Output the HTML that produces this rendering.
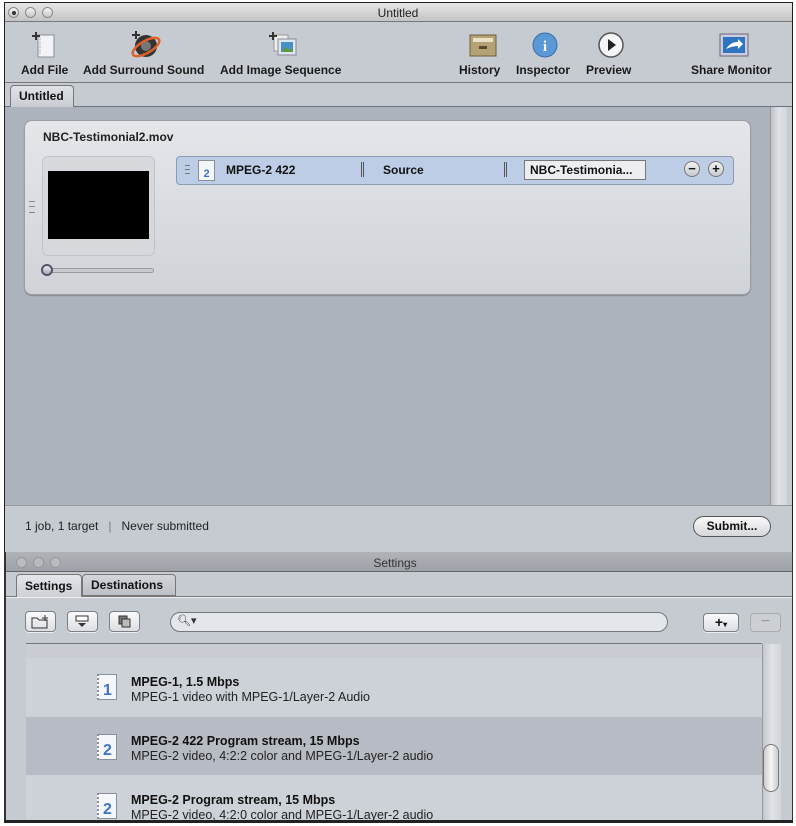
<!DOCTYPE html>
<html><head><meta charset="utf-8"><style>
*{margin:0;padding:0;box-sizing:border-box}
body{width:796px;height:823px;background:#fff;position:relative;overflow:hidden;font-family:"Liberation Sans",sans-serif;color:#111}
.a{position:absolute}
.b{font-weight:bold;font-size:12px}
.lbl{position:absolute;top:63px;font-weight:bold;font-size:12px;color:#1a1a1a;white-space:nowrap}
.dot{position:absolute;width:11px;height:11px;border-radius:50%;border:1px solid #888;background:linear-gradient(#f4f4f4,#c8c8c8)}
.btn{position:absolute;border:1px solid #7b7f86;border-radius:4px;background:linear-gradient(#fbfbfc,#dcdee2);box-shadow:0 1px 0 #eee}
.row{position:absolute;left:26px;width:736px}
.fi{position:absolute;width:20px;height:26px;background:#f4f6fa;border:1px solid #8a9099;border-left:2px dotted #8a9099;color:#3f74c6;font-weight:bold;font-size:16px;text-align:center;line-height:32px}
.t1{position:absolute;left:131px;font-weight:bold;font-size:12.5px;color:#111}
.t2{position:absolute;left:131px;font-size:12.5px;color:#222}
</style></head><body>
<div class="a" style="left:4px;top:2px;width:789px;height:550px;border:1px solid #222;background:#c6cad1"></div>
<div class="a" style="left:5px;top:3px;width:787px;height:19px;background:linear-gradient(#e6e6e6,#c4c4c4);border-bottom:1px solid #777"></div>
<div class="dot" style="left:8px;top:7px"></div><div class="a" style="left:12px;top:11px;width:4px;height:4px;border-radius:50%;background:#333"></div>
<div class="dot" style="left:25px;top:7px"></div><div class="dot" style="left:42px;top:7px"></div>
<div class="a" style="left:0;width:796px;top:6px;text-align:center;font-size:12px;color:#222">Untitled</div>
<svg class="a" style="left:32px;top:31px" width="26" height="28"><rect x="6" y="4" width="16" height="22" fill="#f2f4f7" stroke="#8b9099"/><line x1="8" y1="6" x2="8" y2="24" stroke="#999" stroke-dasharray="1 1"/><path d="M0 5h8M4 1v8" stroke="#333" stroke-width="2"/></svg>
<svg class="a" style="left:130px;top:30px" width="32" height="30"><circle cx="16" cy="16" r="11" fill="#333"/><circle cx="16" cy="16" r="5" fill="#777"/><ellipse cx="16" cy="17" rx="15" ry="6" fill="none" stroke="#e0602a" stroke-width="2.5" transform="rotate(-30 16 17)"/><path d="M2 5h8M6 1v8" stroke="#333" stroke-width="2"/></svg>
<svg class="a" style="left:268px;top:31px" width="32" height="28"><rect x="6" y="4" width="14" height="16" fill="#eee" stroke="#999"/><rect x="10" y="8" width="18" height="16" fill="#dfe6ee" stroke="#889"/><rect x="13" y="11" width="12" height="10" fill="#4a90c8"/><path d="M13 21l5-5 4 3 3-2v4z" fill="#5a9a48"/><path d="M1 5h8M5 1v8" stroke="#333" stroke-width="2"/></svg>
<svg class="a" style="left:469px;top:33px" width="28" height="24"><rect x="1" y="2" width="26" height="21" fill="#b5a274" stroke="#6e5f3c"/><rect x="4" y="5" width="20" height="4" fill="#e9e2c9"/><rect x="10" y="13" width="8" height="3" fill="#5a4c2a"/></svg>
<svg class="a" style="left:530px;top:31px" width="30" height="28"><circle cx="15" cy="14" r="12" fill="#5b98d6" stroke="#3c6ea8"/><text x="15" y="20" text-anchor="middle" fill="#fff" font-family="Liberation Serif" font-weight="bold" font-size="15">i</text></svg>
<svg class="a" style="left:596px;top:31px" width="30" height="28"><circle cx="15" cy="14" r="12" fill="#f4f5f7" stroke="#555" stroke-width="1.5"/><path d="M12 8l8 6-8 6z" fill="#222"/></svg>
<svg class="a" style="left:719px;top:33px" width="30" height="24"><rect x="1" y="1" width="28" height="22" fill="#ccd" stroke="#667"/><rect x="4" y="4" width="22" height="16" fill="#2f74c0"/><path d="M7 16c4-6 8-7 12-7v-3l5 5-5 5v-3c-4 0-8 1-12 3z" fill="#fff"/></svg>
<div class="lbl" style="left:21px">Add File</div>
<div class="lbl" style="left:83px">Add Surround Sound</div>
<div class="lbl" style="left:220px">Add Image Sequence</div>
<div class="lbl" style="left:459px">History</div>
<div class="lbl" style="left:516px">Inspector</div>
<div class="lbl" style="left:586px">Preview</div>
<div class="lbl" style="left:691px">Share Monitor</div>
<div class="a" style="left:5px;top:82px;width:787px;height:25px;background:#c6cad1;border-top:1px solid #777;border-bottom:1px solid #6e737b"></div>
<div class="a" style="left:10px;top:85px;width:64px;height:22px;background:linear-gradient(#dfe2e6,#c9ccd2);border:1px solid #777;border-bottom:none;border-radius:4px 4px 0 0;font-weight:bold;font-size:12px;padding:3px 0 0 8px">Untitled</div>
<div class="a" style="left:5px;top:107px;width:765px;height:398px;background:#adb3bc"></div>
<div class="a" style="left:770px;top:107px;width:17px;height:398px;background:linear-gradient(90deg,#bfc3ca,#dfe1e5,#d3d6db);border-left:1px solid #999"></div>
<div class="a" style="left:24px;top:120px;width:727px;height:175px;border-radius:8px;background:linear-gradient(#e4e6ea,#d0d3d8);border:1px solid #9a9ea6;box-shadow:0 1px 1px #888"></div>
<div class="a b" style="left:43px;top:130px;color:#222">NBC-Testimonial2.mov</div>
<div class="a" style="left:29px;top:201px;width:6px;height:12px;border-top:1px solid #888;border-bottom:1px solid #888"><div style="margin-top:4px;border-top:1px solid #888"></div></div>
<div class="a" style="left:42px;top:156px;width:113px;height:100px;border-radius:6px;background:#d6d8dc;border:1px solid #c0c3c8"></div>
<div class="a" style="left:48px;top:171px;width:101px;height:68px;background:#000"></div>
<div class="a" style="left:44px;top:268px;width:110px;height:5px;border-radius:3px;background:#c8cbd0;border:1px solid #999"></div>
<div class="a" style="left:41px;top:264px;width:12px;height:12px;border-radius:50%;background:linear-gradient(#e8eaee,#aab);border:2px solid #556"></div>
<div class="a" style="left:176px;top:156px;width:558px;height:29px;border-radius:4px;background:#bccde5;border:1px solid #8c9bb0"></div>
<div class="a" style="left:185px;top:165px;width:5px;height:9px;border-top:1px solid #777;border-bottom:1px solid #777"><div style="margin-top:3px;border-top:1px solid #777"></div></div>
<div class="a" style="left:198px;top:160px;width:17px;height:21px;background:#f4f6fa;border:1px solid #8a9099;color:#3f74c6;font-weight:bold;font-size:11px;text-align:center;line-height:26px">2</div>
<div class="a b" style="left:226px;top:163px">MPEG-2 422</div>
<div class="a" style="left:361px;top:162px;width:3px;height:15px;border-left:1px solid #555;border-right:1px solid #555"></div>
<div class="a b" style="left:383px;top:163px">Source</div>
<div class="a" style="left:504px;top:162px;width:3px;height:15px;border-left:1px solid #555;border-right:1px solid #555"></div>
<div class="a b" style="left:524px;top:160px;width:122px;height:20px;background:#eceef2;border:1px solid #777;padding:2px 0 0 5px">NBC-Testimonia...</div>
<div class="a" style="left:684px;top:161px;width:16px;height:16px;border-radius:50%;border:1px solid #777;background:linear-gradient(#f2f2f4,#c8cad0);text-align:center;font-weight:bold;font-size:13px;line-height:13px">−</div>
<div class="a" style="left:708px;top:161px;width:16px;height:16px;border-radius:50%;border:1px solid #777;background:linear-gradient(#f2f2f4,#c8cad0);text-align:center;font-weight:bold;font-size:13px;line-height:14px">+</div>
<div class="a" style="left:5px;top:505px;width:787px;height:47px;background:#c6cad1;border-top:1px solid #999"></div>
<div class="a" style="left:25px;top:519px;font-size:12px;color:#222">1 job, 1 target &nbsp;&nbsp;<span style="color:#777">|</span>&nbsp;&nbsp; Never submitted</div>
<div class="a b" style="left:693px;top:516px;width:78px;height:21px;border-radius:11px;border:1px solid #555;background:linear-gradient(#fafafa,#d5d7db);text-align:center;line-height:19px">Submit...</div>
<div class="a" style="left:4px;top:552px;width:789px;height:271px;background:#c6cad1;border-left:2px solid #333;border-right:1px solid #333"></div>
<div class="a" style="left:6px;top:552px;width:786px;height:20px;background:linear-gradient(#b0b3b8,#9ea2a8);border-bottom:1px solid #666"></div>
<div class="dot" style="left:16px;top:557px;border-color:#999;background:#b8bbc0"></div><div class="dot" style="left:33px;top:557px;border-color:#999;background:#b8bbc0"></div><div class="dot" style="left:50px;top:557px;border-color:#999;background:#b8bbc0"></div>
<div class="a" style="left:0;width:790px;top:556px;text-align:center;font-size:12px;color:#333">Settings</div>
<div class="a" style="left:6px;top:596px;width:786px;height:2px;border-top:1px solid #777;border-bottom:1px solid #eee"></div>
<div class="a b" style="left:16px;top:574px;width:66px;height:23px;background:linear-gradient(#e4e6ea,#cdd0d5);border:1px solid #777;border-bottom:none;border-radius:4px 4px 0 0;padding:4px 0 0 8px">Settings</div>
<div class="a b" style="left:82px;top:574px;width:94px;height:22px;background:linear-gradient(#d2d5da,#bcc0c6);border:1px solid #777;border-radius:4px 4px 0 0;padding:3px 0 0 8px">Destinations</div>
<div class="btn" style="left:25px;top:611px;width:31px;height:21px"><svg width="29" height="19"><path d="M6 6h5l2 2h8v8H6z" fill="none" stroke="#333"/><path d="M19 3v6M16 6h6" stroke="#333"/></svg></div>
<div class="btn" style="left:67px;top:611px;width:31px;height:21px"><svg width="29" height="19"><rect x="8" y="4" width="12" height="5" fill="#fff" stroke="#333"/><path d="M10 11h8l-4 4z" fill="#333"/></svg></div>
<div class="btn" style="left:109px;top:611px;width:31px;height:21px"><svg width="29" height="19"><rect x="9" y="4" width="8" height="8" fill="#777" stroke="#333"/><rect x="12" y="7" width="8" height="8" fill="#bbb" stroke="#333"/></svg></div>
<div class="a" style="left:170px;top:612px;width:498px;height:20px;border-radius:10px;border:1px solid #777;background:#e3e6eb;font-size:11px;padding:1px 0 0 6px;color:#333">🔍︎▾</div>
<div class="btn b" style="left:703px;top:613px;width:36px;height:19px;text-align:center;font-size:14px;line-height:16px">+<span style="font-size:8px">▾</span></div>
<div class="a" style="left:750px;top:613px;width:31px;height:19px;border:1px solid #aaa;border-radius:4px;background:#ccd0d5;text-align:center;color:#999;line-height:16px">−</div>
<div class="a" style="left:26px;top:643px;width:736px;height:180px;background:#cdd1d8;border-top:1px solid #777"></div>
<div class="row" style="top:644px;height:14px;background:#c9cdd3"></div>
<div class="row" style="top:717px;height:58px;background:#b7bbc3"></div>
<div class="a" style="left:762px;top:644px;width:19px;height:179px;background:linear-gradient(90deg,#c4c7cc,#e1e3e6,#d2d5d9);border-left:1px solid #999"></div>
<div class="a" style="left:763px;top:744px;width:16px;height:48px;border-radius:8px;border:1px solid #777;background:linear-gradient(90deg,#ccc,#f6f6f6,#ccc)"></div>
<div class="fi" style="left:97px;top:674px">1</div>
<div class="t1" style="top:675px">MPEG-1, 1.5 Mbps</div>
<div class="t2" style="top:690px">MPEG-1 video with MPEG-1/Layer-2 Audio</div>
<div class="fi" style="left:97px;top:734px">2</div>
<div class="t1" style="top:734px">MPEG-2 422 Program stream, 15 Mbps</div>
<div class="t2" style="top:749px">MPEG-2 video, 4:2:2 color and MPEG-1/Layer-2 audio</div>
<div class="fi" style="left:97px;top:793px">2</div>
<div class="t1" style="top:793px">MPEG-2 Program stream, 15 Mbps</div>
<div class="t2" style="top:808px">MPEG-2 video, 4:2:0 color and MPEG-1/Layer-2 audio</div>
<div class="a" style="left:4px;top:820px;width:789px;height:3px;background:#222"></div>
</body></html>
